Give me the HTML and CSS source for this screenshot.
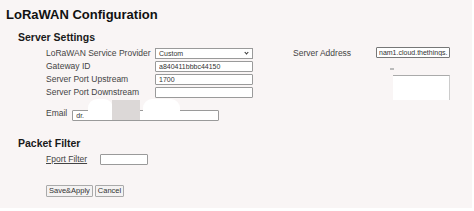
FILE: index.html
```html
<!DOCTYPE html>
<html lang="en">
<head>
  <meta charset="UTF-8">
  <title>LoRaWAN Configuration</title>
  <link rel="stylesheet" href="styles.css">
</head>
<body>
  <div class="page">
    <h1>LoRaWAN Configuration</h1>

    <h2>Server Settings</h2>
    <div class="settings">
      <label class="lbl">LoRaWAN Service Provider</label>
      <div class="field">
        <div class="select">Custom<span class="caret"></span></div>
      </div>
      <span class="spacer"></span>
      <label class="lbl">Server Address</label>
      <input class="box addr" type="text" value="nam1.cloud.thethings.">

      <label class="lbl">Gateway ID</label>
      <input class="box" type="text" value="a840411bbbc44150">
      <span class="spacer"></span>
      <span></span>
      <div class="ghost-wrap"><span class="ghost-dot"></span></div>

      <label class="lbl">Server Port Upstream</label>
      <input class="box" type="text" value="1700">
      <span class="spacer"></span>
      <span></span>
      <div class="ghost-box"></div>

      <label class="lbl">Server Port Downstream</label>
      <input class="box" type="text" value="">
    </div>

    <div class="email-row">
      <label class="lbl">Email</label>
      <div class="email-field">
        <input class="box email" type="text" value="dr.">
        <span class="blur b1"></span>
        <span class="blur b2"></span>
        <span class="blur b3"></span>
      </div>
    </div>

    <h2 class="packet">Packet Filter</h2>
    <div class="fport-row">
      <label class="lbl fport">Fport Filter</label>
      <input class="box small" type="text" value="">
    </div>

    <div class="actions">
      <button type="button" class="btn">Save&amp;Apply</button>
      <button type="button" class="btn">Cancel</button>
    </div>
  </div>
</body>
</html>
```

FILE: styles.css
```css
body {
  margin: 0;
  background: #ffffff;
  font-family: "Liberation Sans", Arial, sans-serif;
  color: #3a3a3a;
}

.page {
  width: 472px;
  height: 208px;
  background-color: #f9f5f5;
  padding: 6px 0 0 6px;
  box-sizing: border-box;
}

h1 {
  margin: 0;
  font-size: 13px;
  font-weight: bold;
  color: #111;
  line-height: 18px;
}

h2 {
  margin: 6px 0 0 12px;
  font-size: 10.5px;
  font-weight: bold;
  color: #1a1a1a;
  line-height: 14px;
}

.settings {
  display: grid;
  grid-template-columns: 109px 98px 40px 83px 74px;
  grid-auto-rows: 13px;
  margin: 4px 0 0 40px;
}

.lbl {
  font-size: 8.5px;
  line-height: 11px;
  color: #444;
  white-space: nowrap;
}

.box {
  width: 100%;
  height: 11px;
  box-sizing: border-box;
  border: 1px solid #9a9a9a;
  border-radius: 1px;
  background: #ffffff;
  font-family: "Liberation Sans", Arial, sans-serif;
  font-size: 7px;
  color: #333;
  padding: 0 0 0 3px;
  margin: 0;
}

.select {
  position: relative;
  height: 11px;
  box-sizing: border-box;
  border: 1px solid #9a9a9a;
  background: #ffffff;
  font-size: 7px;
  line-height: 9px;
  padding-left: 3px;
  color: #333;
}

.caret {
  position: absolute;
  right: 4px;
  top: 2px;
  width: 2px;
  height: 2px;
  border-right: 1px solid #333;
  border-bottom: 1px solid #333;
  transform: rotate(45deg);
}

.addr {
  margin-top: -1px;
  border-color: #777;
  padding-left: 2px;
}

.ghost-wrap {
  position: relative;
}

.ghost-dot {
  position: absolute;
  left: 14px;
  top: 7px;
  width: 4px;
  height: 2px;
  background: #bbb;
}

.ghost-box {
  height: 24px;
  margin: 1px 0 0 17px;
  background: #ffffff;
  border-top: 1px solid #aaa;
  border-right: 1px solid #ccc;
}

.email-row {
  display: flex;
  align-items: center;
  gap: 5px;
  margin: 4px 0 0 40px;
}

.email-field {
  position: relative;
  width: 147px;
}

.blur {
  position: absolute;
  top: -5px;
  height: 21px;
}

.b1 {
  left: 16px;
  width: 25px;
  background: #ffffff;
  border-radius: 9px;
}

.b2 {
  left: 40px;
  width: 28px;
  top: -4px;
  height: 20px;
  background: #dcd8d7;
}

.b3 {
  left: 71px;
  width: 37px;
  background: #ffffff;
  border-radius: 9px;
}

.packet {
  margin-top: 14px;
}

.fport-row {
  display: flex;
  align-items: center;
  gap: 13px;
  margin: 4px 0 0 40px;
}

.fport {
  text-decoration: underline;
}

.small {
  width: 48px;
}

.actions {
  display: flex;
  gap: 2px;
  margin: 20px 0 0 40px;
}

.btn {
  height: 12px;
  padding: 0 2px;
  font-family: "Liberation Sans", Arial, sans-serif;
  font-size: 7.5px;
  line-height: 10px;
  color: #333;
  background: #f4f2f2;
  border: 1px solid #aaa;
  border-radius: 1px;
}
```
